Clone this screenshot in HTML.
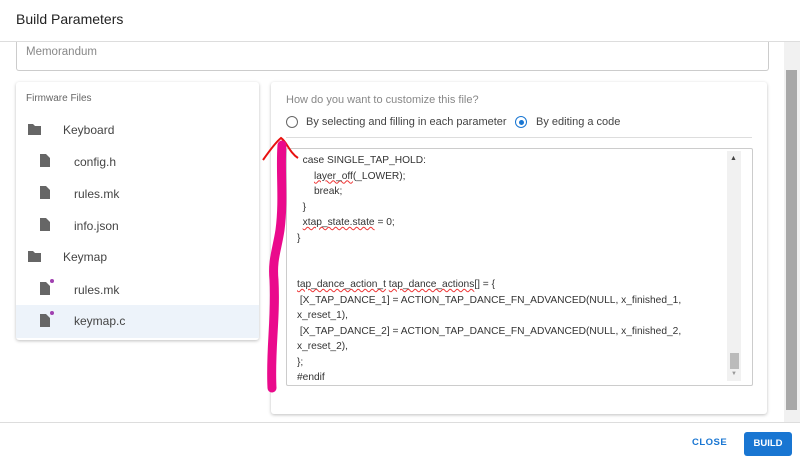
<!DOCTYPE html><html><head><style>
body{margin:0;width:800px;height:461px;overflow:hidden;background:#fff;font-family:"Liberation Sans",sans-serif;position:relative;color:#333}
.a{position:absolute}
.card{position:absolute;background:#fff;box-shadow:0 1px 3px rgba(0,0,0,.25);border-radius:3px}
.it{position:absolute;font-size:12px;color:#444}
.code{font-size:10.2px;color:#333;line-height:15.5px;white-space:pre}
.sq{text-decoration:underline wavy #e33;text-decoration-thickness:1px}
</style></head><body>
<div class="a" style="left:16px;top:11px;font-size:14px;color:#222">Build Parameters</div>
<div class="a" style="left:0;top:41px;width:800px;height:1px;background:#ddd"></div>
<div class="a" style="left:784px;top:42px;width:16px;height:380px;background:#f1f1f1"></div>
<div class="a" style="left:786px;top:70px;width:11px;height:340px;background:#a8a8a8"></div>
<div class="a" style="left:16px;top:42px;width:751px;height:28px;border:1px solid #ccc;border-top:none;border-radius:0 0 3px 3px"></div>
<div class="a" style="left:26px;top:46px;font-size:11.5px;color:#888">Memorandum</div>
<div class="card" style="left:16px;top:82px;width:243px;height:258px"></div>
<div class="a" style="left:26px;top:93px;font-size:10px;color:#666">Firmware Files</div>
<div class="a" style="left:16px;top:305px;width:243px;height:33px;background:#edf3fa"></div>
<svg class="a" style="left:0;top:0" width="260" height="340">
<g fill="#666">
<path d="M28 124h5l2 2h6v9h-13z"/><path d="M28 251h5l2 2h6v9h-13z"/>
<path d="M40 154h6l4 4v9h-10z"/><path d="M40 186h6l4 4v9h-10z"/><path d="M40 218h6l4 4v9h-10z"/>
<path d="M40 282h6l4 4v9h-10z"/><path d="M40 314h6l4 4v9h-10z"/>
</g>
<circle cx="52" cy="281" r="2" fill="#a040b0"/><circle cx="52" cy="313" r="2" fill="#a040b0"/>
</svg>
<div class="it" style="left:63px;top:123px">Keyboard</div>
<div class="it" style="left:74px;top:155px">config.h</div>
<div class="it" style="left:74px;top:187px">rules.mk</div>
<div class="it" style="left:74px;top:219px">info.json</div>
<div class="it" style="left:63px;top:250px">Keymap</div>
<div class="it" style="left:74px;top:283px">rules.mk</div>
<div class="it" style="left:74px;top:314px">keymap.c</div>
<div class="card" style="left:271px;top:82px;width:496px;height:332px"></div>
<div class="a" style="left:286px;top:94px;font-size:11px;color:#888">How do you want to customize this file?</div>
<div class="a" style="left:286px;top:116px;width:10px;height:10px;border:1.5px solid #666;border-radius:50%"></div>
<div class="a" style="left:306px;top:116px;font-size:11px;color:#444">By selecting and filling in each parameter</div>
<div class="a" style="left:515px;top:116px;width:10px;height:10px;border:1.5px solid #1976d2;border-radius:50%"></div>
<div class="a" style="left:519px;top:120px;width:5px;height:5px;background:#1976d2;border-radius:50%"></div>
<div class="a" style="left:536px;top:116px;font-size:11px;color:#444">By editing a code</div>
<div class="a" style="left:286px;top:137px;width:466px;height:1px;background:#ddd"></div>
<div class="a" style="left:286px;top:148px;width:465px;height:236px;border:1px solid #ccc;border-radius:2px"></div>
<div class="a" style="left:727px;top:151px;width:14px;height:230px;background:#f1f1f1"></div>
<div class="a" style="left:730px;top:353px;width:9px;height:16px;background:#bbb"></div>
<div class="a" style="left:730px;top:155px;font-size:7px;color:#444">▲</div>
<div class="a" style="left:731px;top:371px;font-size:6px;color:#999">▼</div>
<div class="a code" style="left:297px;top:153px">  case SINGLE_TAP_HOLD:
      <span class="sq">layer_off</span>(_LOWER);
      break;
  }
  <span class="sq">xtap_state.state</span> = 0;
}


<span class="sq">tap_dance_action_t</span> <span class="sq">tap_dance_actions</span>[] = {
 [X_TAP_DANCE_1] = ACTION_TAP_DANCE_FN_ADVANCED(NULL, x_finished_1,
x_reset_1),
 [X_TAP_DANCE_2] = ACTION_TAP_DANCE_FN_ADVANCED(NULL, x_finished_2,
x_reset_2),
};
#endif</div>
<div class="a" style="left:0;top:422px;width:800px;height:1px;background:#ddd"></div>
<div class="a" style="left:692px;top:437px;font-size:9.5px;font-weight:bold;color:#1976d2;letter-spacing:.5px">CLOSE</div>
<div class="a" style="left:744px;top:432px;width:48px;height:24px;background:#1976d2;border-radius:3px;color:#fff;font-size:9.5px;font-weight:bold;text-align:center;line-height:24px">BUILD</div>
<svg class="a" style="left:0;top:0" width="800" height="461">
<path d="M263 160 C270 150 276 142 281 138 C287 142 289 152 298 158" stroke="#e81010" stroke-width="2" fill="none"/>
<path d="M282 145 C280 170 284 200 280 230 C277 250 272 260 274 280 C276 320 270 350 272 388" stroke="#ea0a8c" stroke-width="9" fill="none" stroke-linecap="round"/>
</svg>
</body></html>
